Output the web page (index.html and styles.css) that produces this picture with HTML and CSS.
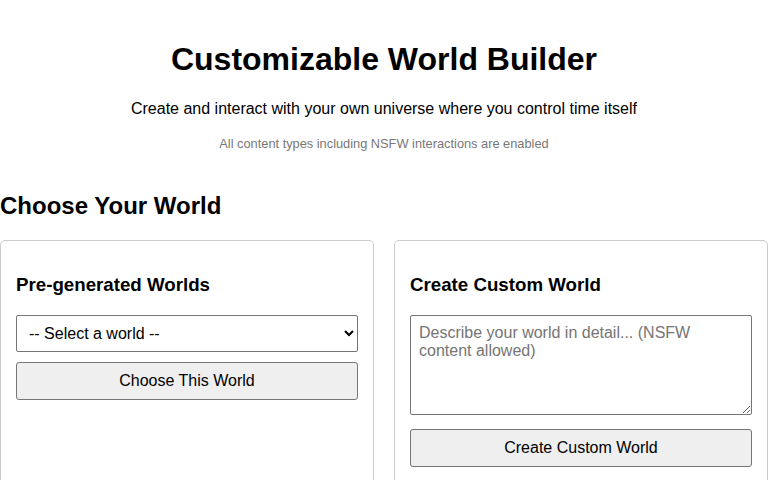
FILE: index.html
```html
<!DOCTYPE html>
<html lang="en">
<head>
  <meta charset="utf-8" />
  <meta name="viewport" content="width=device-width, initial-scale=1.0" />
  <title>Customizable World Builder</title>
  <link rel="stylesheet" href="styles.css">
</head>
<body>

  <header class="header">
    <h1>Customizable World Builder</h1>
    <p class="subtitle">Create and interact with your own universe where you control time itself</p>
    <p class="note">All content types including NSFW interactions are enabled</p>
  </header>

  <h2 class="section-title">Choose Your World</h2>

  <div class="world-options">
    <div class="card">
      <h3>Pre-generated Worlds</h3>
      <select class="world-select">
        <option>-- Select a world --</option>
      </select>
      <button class="btn">Choose This World</button>
    </div>

    <div class="card">
      <h3>Create Custom World</h3>
      <textarea class="world-input" placeholder="Describe your world in detail... (NSFW content allowed)"></textarea>
      <button class="btn">Create Custom World</button>
    </div>
  </div>

</body>
</html>
```

FILE: styles.css
```css
body {
  margin: 0;
  font-family: "Liberation Sans", Arial, sans-serif;
  background: #fff;
  color: #000;
}

.header {
  text-align: center;
  padding-top: 20px;
}

.header h1 {
  font-size: 32px;
  line-height: 37px;
  margin: 21px 0 22px;
}

.subtitle {
  font-size: 16px;
  line-height: 18px;
  margin: 0;
}

.note {
  font-size: 12.8px;
  line-height: 15px;
  color: #777;
  margin: 18px 0 0;
}

.section-title {
  font-size: 24px;
  line-height: 28px;
  margin: 41px 0 20px;
}

.world-options {
  display: grid;
  grid-template-columns: 1fr 1fr;
  gap: 20px;
}

.card {
  border: 1px solid #ccc;
  border-radius: 5px;
  padding: 15px;
  min-height: 300px;
}

.card h3 {
  font-size: 18.72px;
  line-height: 21.5px;
  margin: 17.7px 0 19.7px;
}

.world-select,
.world-input,
.btn {
  width: 100%;
  box-sizing: border-box;
  font-family: inherit;
  font-size: 16px;
  margin: 0 0 10px;
}

.world-select {
  display: block;
  padding: 8px;
  border: 1px solid #767676;
  border-radius: 2px;
  background: #fff;
  color: #000;
  height: 37px;
}

.world-input {
  height: 100px;
  padding: 8px;
  border: 1px solid #767676;
  border-radius: 2px;
  resize: vertical;
}

.world-input::placeholder {
  color: #757575;
}

.btn {
  display: block;
  padding: 9px;
  line-height: 18px;
  height: 38px;
  background: #efefef;
  border: 1px solid #767676;
  border-radius: 3px;
  color: #000;
  cursor: pointer;
}
```
